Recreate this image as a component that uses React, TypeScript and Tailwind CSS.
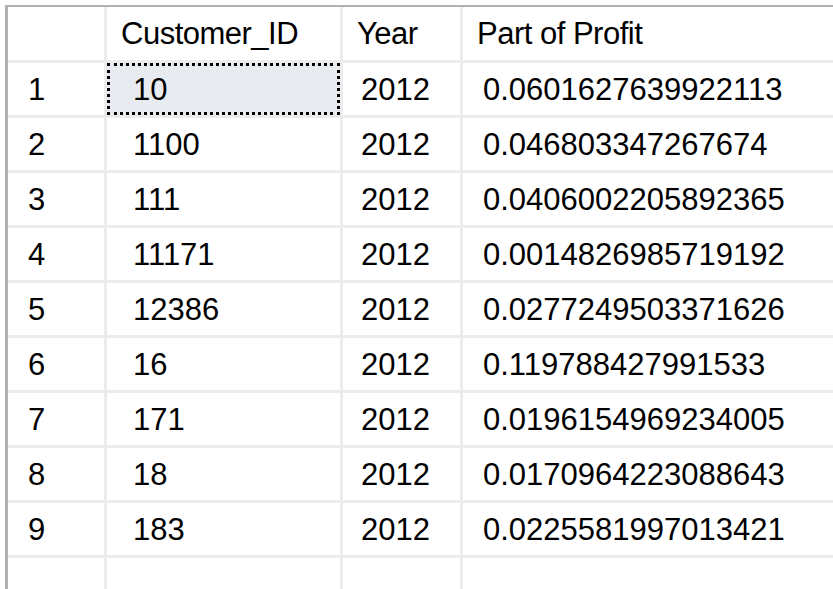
const rows = [
  ["10", "0.0601627639922113"],
  ["1100", "0.046803347267674"],
  ["111", "0.0406002205892365"],
  ["11171", "0.0014826985719192"],
  ["12386", "0.0277249503371626"],
  ["16", "0.119788427991533"],
  ["171", "0.0196154969234005"],
  ["18", "0.0170964223088643"],
  ["183", "0.0225581997013421"],
];

const cols = "grid grid-cols-[96px_233px_117px_1fr] gap-x-[3px] shrink-0";

export default function App() {
  return (
    <div className="w-[833px] h-[589px] overflow-hidden bg-white pt-[5px] pl-[5px] font-[Liberation_Sans,Arial,sans-serif] text-[31px] text-black leading-none">
      <div className="border-l-[3px] border-t-[2px] border-[#b0b0b4] bg-[#ececec] h-[620px] flex flex-col gap-y-[3px]">
        <div className={`${cols} h-[53px]`}>
          <div className="bg-white" />
          <div className="bg-white flex items-center pl-[14px] tracking-[-0.5px]">Customer_ID</div>
          <div className="bg-white flex items-center pl-[14px] tracking-[-0.5px]">Year</div>
          <div className="bg-white flex items-center pl-[14px] tracking-[-0.5px]">Part of Profit</div>
        </div>
        {rows.map((r, i) => (
          <div key={i} className={`${cols} h-[52px]`}>
            <div className="bg-white flex items-center pl-[20px]">{i + 1}</div>
            <div className={`flex items-center ${i === 0 ? "bg-[#e8ecf0] border-[3px] border-dotted border-black pl-[23px]" : "bg-white pl-[26px]"}`}>{r[0]}</div>
            <div className="bg-white flex items-center pl-[18px]">2012</div>
            <div className="bg-white flex items-center pl-[20px]">{r[1]}</div>
          </div>
        ))}
        <div className={`${cols} h-[60px]`}>
          <div className="bg-white" />
          <div className="bg-white" />
          <div className="bg-white" />
          <div className="bg-white" />
        </div>
      </div>
    </div>
  );
}
